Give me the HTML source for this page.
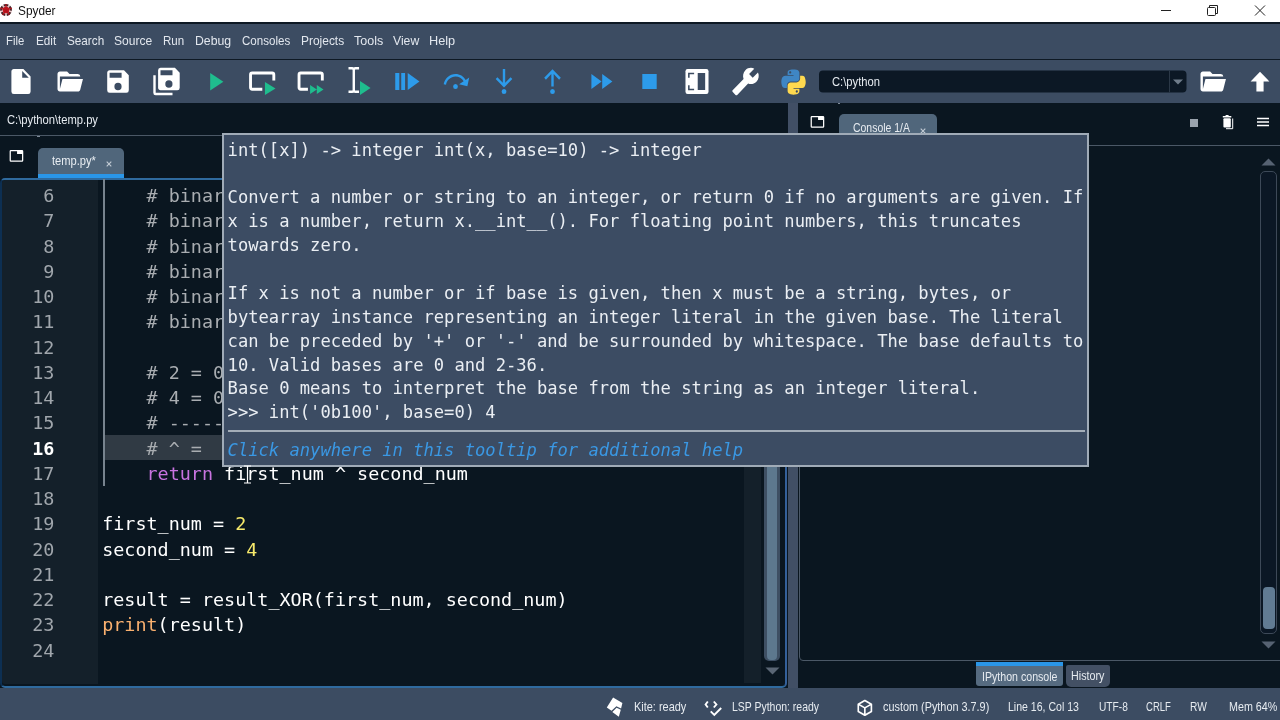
<!DOCTYPE html>
<html lang="en">
<head>
<meta charset="utf-8">
<title>Spyder</title>
<style>
*{box-sizing:border-box;margin:0;padding:0}
html,body{width:1280px;height:720px;overflow:hidden;background:#0a1620}
body{position:relative;font-family:"Liberation Sans",sans-serif;color:#e4e9ef;font-size:12px}
#root{position:absolute;left:0;top:0;width:1280px;height:720px;will-change:transform}
.abs{position:absolute}
svg{position:absolute;overflow:visible}
#titlebar{left:0;top:0;width:1280px;height:22px;background:#fff}
#titlebar .t{left:18px;top:3px;font-size:12.5px;color:#111;line-height:16px}
#menubar{left:0;top:22px;width:1280px;height:38px;background:#3c4c62;border-top:2px solid #0e1924;border-bottom:1px solid #0e1924}
#menubar span{position:absolute;top:9px;line-height:16px;font-size:12.3px;color:#e2e7ee;white-space:nowrap}
#toolbar{left:0;top:60px;width:1280px;height:43px;background:#3c4c62}
.mono{font-family:"DejaVu Sans Mono","Liberation Mono",monospace}
#split{left:787.6px;top:103px;width:10.8px;height:585px;background:#414f65}
#status{left:0;top:688.4px;width:1280px;height:32px;background:#3c4c62}
#status span{position:absolute;top:11px;line-height:16px;font-size:12.3px;color:#e2e7ee;white-space:nowrap}
.ui{position:absolute;line-height:16px;font-size:11.2px;color:#e6ebf0;white-space:nowrap;transform-origin:0 50%}
#editor{left:0px;top:178px;width:787px;height:509.5px;border:2px solid #2f6a9e;border-left-color:#0d2f52;border-right-color:#34609a;border-radius:5px;background:#0a1620}
.ln{position:absolute;left:0;width:54.4px;text-align:right;font-size:18.42px;line-height:25.25px;height:25.25px;color:#a0a6ac}
.ln.cur{color:#fff;font-weight:bold}
.cl{position:absolute;left:102.2px;white-space:pre;font-size:18.42px;line-height:25.25px;height:25.25px;color:#fff}
.c{color:#a9adb1}.k{color:#c873e0}.n{color:#f7ea6b}.b{color:#f9b06f}
#tip{left:221.8px;top:133px;width:867.5px;height:333.6px;background:#3c4c63;border:2px solid #a0abb7}
.tl{position:absolute;left:227.6px;white-space:pre;font-size:17.14px;line-height:23.88px;height:23.88px;color:#eaeef3}
</style>
</head>
<body>
<div id="root">
<div id="titlebar" class="abs">
<svg style="left:0;top:3px" width="14" height="14" viewBox="0 0 14 14"><circle cx="6" cy="7" r="6" fill="#e9c9cb"/><path d="M3.37 1.61A6.0 6.0 0 0 1 8.63 1.61L7.71 3.49A3.9 3.9 0 0 0 4.29 3.49ZM10.32 2.83A6.0 6.0 0 0 1 11.94 7.84L9.86 7.54A3.9 3.9 0 0 0 8.81 4.29ZM11.30 9.82A6.0 6.0 0 0 1 7.04 12.91L6.68 10.84A3.9 3.9 0 0 0 9.44 8.83ZM4.96 12.91A6.0 6.0 0 0 1 0.70 9.82L2.56 8.83A3.9 3.9 0 0 0 5.32 10.84ZM0.06 7.84A6.0 6.0 0 0 1 1.68 2.83L3.19 4.29A3.9 3.9 0 0 0 2.14 7.54Z" fill="#43262a"/><circle cx="6" cy="7" r="3.3" fill="#c3161f"/><path d="M6 7L6 1M6 7L11.7 5.1M6 7L9.5 11.9M6 7L2.5 11.9M6 7L0.3 5.1" stroke="#b3121b" stroke-width="1.3"/></svg>

<svg style="left:1150px;top:0" width="130" height="22" viewBox="0 0 130 22" fill="none" stroke="#222" stroke-width="1"><path d="M11 10.5 H21"/><rect x="57.5" y="7.5" width="8" height="8" rx="1"/><path d="M59.5 7.5 V5.5 H67.5 V13.5 H65.5"/><path d="M105 5.5 L115 15.5 M115 5.5 L105 15.5"/></svg>
</div>
<div class="ui" style="left:17.60px;top:3.20px;font-size:12.4px;color:#111;transform:scaleX(0.9545);">Spyder</div>
<div id="menubar" class="abs"></div>
<div class="ui" style="left:6.20px;top:33.30px;font-size:12.4px;color:#e2e7ee;transform:scaleX(0.9109);">File</div>
<div class="ui" style="left:36.20px;top:33.30px;font-size:12.4px;color:#e2e7ee;transform:scaleX(0.9454);">Edit</div>
<div class="ui" style="left:67.20px;top:33.30px;font-size:12.4px;color:#e2e7ee;transform:scaleX(0.9468);">Search</div>
<div class="ui" style="left:114.20px;top:33.30px;font-size:12.4px;color:#e2e7ee;transform:scaleX(0.9723);">Source</div>
<div class="ui" style="left:163.20px;top:33.30px;font-size:12.4px;color:#e2e7ee;transform:scaleX(0.9320);">Run</div>
<div class="ui" style="left:195.20px;top:33.30px;font-size:12.4px;color:#e2e7ee;transform:scaleX(0.9907);">Debug</div>
<div class="ui" style="left:242.20px;top:33.30px;font-size:12.4px;color:#e2e7ee;transform:scaleX(0.9324);">Consoles</div>
<div class="ui" style="left:301.20px;top:33.30px;font-size:12.4px;color:#e2e7ee;transform:scaleX(0.9644);">Projects</div>
<div class="ui" style="left:354.20px;top:33.30px;font-size:12.4px;color:#e2e7ee;transform:scaleX(1.0087);">Tools</div>
<div class="ui" style="left:393.20px;top:33.30px;font-size:12.4px;color:#e2e7ee;transform:scaleX(0.9830);">View</div>
<div class="ui" style="left:429.20px;top:33.30px;font-size:12.4px;color:#e2e7ee;transform:scaleX(1.0273);">Help</div>
<div id="toolbar" class="abs">
<svg style="left:0;top:0" width="1280" height="43" viewBox="0 0 1280 43">
<g transform="translate(6.6 6.5) scale(1.2 1.25)"><path d="M13,9V3.5L18.5,9M6,2C4.89,2 4,2.89 4,4V20A2,2 0 0,0 6,22H18A2,2 0 0,0 20,20V8L14,2H6Z" fill="#ffffff"/></g>
<g transform="translate(55.1 6.5) scale(1.2 1.25)"><path d="M19,20H4C2.89,20 2,19.1 2,18V6C2,4.89 2.89,4 4,4H10L12,6H19A2,2 0 0,1 21,8H21L4,8V18L6.14,10H23.21L20.93,18.5C20.7,19.37 19.92,20 19,20Z" fill="#ffffff"/></g>
<g transform="translate(103.6 6.5) scale(1.2 1.25)"><path d="M15,9H5V5H15M12,19A3,3 0 0,1 9,16A3,3 0 0,1 12,13A3,3 0 0,1 15,16A3,3 0 0,1 12,19M17,3H5C3.89,3 3,3.9 3,5V19A2,2 0 0,0 5,21H19A2,2 0 0,0 21,19V7L17,3Z" fill="#ffffff"/></g>
<g transform="translate(152.1 6.5) scale(1.2 1.25)"><path d="M17,7V3H7V7H17M14,17A3,3 0 0,0 17,14A3,3 0 0,0 14,11A3,3 0 0,0 11,14A3,3 0 0,0 14,17M19,1L23,5V17A2,2 0 0,1 21,19H7C5.89,19 5,18.1 5,17V3A2,2 0 0,1 7,1H19M1,7H3V21H17V23H3A2,2 0 0,1 1,21V7Z" fill="#ffffff"/></g>
<g transform="translate(200.6 6.5) scale(1.2 1.25)"><path d="M8,5.14V19.14L19,12.14L8,5.14Z" fill="#1fbd8e"/></g>
<g transform="translate(249.1 6.5) scale(1.2 1.25)"><path d="M11 18.1H2.6Q1.2 18.1 1.2 16.7V6.6Q1.2 5.2 2.6 5.2H19.2Q20.6 5.2 20.6 6.6V11.2" fill="none" stroke="#ffffff" stroke-width="2.4"/><path d="M13.2 12.4L22 17.6L13.2 22.8Z" fill="#1fbd8e"/></g>
<g transform="translate(297.6 6.5) scale(1.2 1.25)"><path d="M8.6 18.1H2.6Q1.2 18.1 1.2 16.7V6.6Q1.2 5.2 2.6 5.2H19.2Q20.6 5.2 20.6 6.6V11.2" fill="none" stroke="#ffffff" stroke-width="2.4"/><path d="M10.4 14.8L16 18.4L10.4 22ZM16 14.8L21.6 18.4L16 22Z" fill="#1fbd8e"/></g>
<g transform="translate(346.1 6.5) scale(1.2 1.25)"><path d="M2 1.4H5Q6.4 1.4 6.4 2.8V18.8Q6.4 20.2 5 20.2H2M10.8 1.4H7.8Q6.4 1.4 6.4 2.8M6.4 18.8Q6.4 20.2 7.8 20.2H10.8" fill="none" stroke="#ffffff" stroke-width="2"/><path d="M11.6 11.6L20.4 17.2L11.6 22.8Z" fill="#1fbd8e"/></g>
<g transform="translate(392.6 6.5) scale(1.2 1.25)"><path d="M2.2 5.2H5.6V18.8H2.2ZM7.2 5.2H10.4V18.8H7.2ZM12.6 5.2L22.4 12L12.6 18.8Z" fill="#2d9bea"/></g>
<g transform="translate(441.1 6.5) scale(1.2 1.25)"><path d="M12,14A2,2 0 0,1 14,16A2,2 0 0,1 12,18A2,2 0 0,1 10,16A2,2 0 0,1 12,14M23.46,8.86L21.87,15.75L15,14.16L18.8,11.78C17.39,9.5 14.87,8 12,8C8.05,8 4.77,10.86 4.12,14.63L2.15,14.28C2.96,9.58 7.06,6 12,6C15.58,6 18.73,7.89 20.5,10.72L23.46,8.86Z" fill="#2d9bea"/></g>
<g transform="translate(489.6 6.5) scale(1.2 1.25)"><path d="M12,22A2,2 0 0,1 10,20A2,2 0 0,1 12,18A2,2 0 0,1 14,20A2,2 0 0,1 12,22M13,2V13L17.5,8.5L18.92,9.92L12,16.84L5.08,9.92L6.5,8.5L11,13V2H13Z" fill="#2d9bea"/></g>
<g transform="translate(538.1 6.5) scale(1.2 1.25)"><path d="M12,22A2,2 0 0,1 10,20A2,2 0 0,1 12,18A2,2 0 0,1 14,20A2,2 0 0,1 12,22M13,16H11V6L6.5,10.5L5.08,9.08L12,2.16L18.92,9.08L17.5,10.5L13,6V16Z" fill="#2d9bea"/></g>
<g transform="translate(586.6 6.5) scale(1.2 1.25)"><path d="M13,6V18L21.5,12M4,18L12.5,12L4,6V18Z" fill="#2d9bea"/></g>
<g transform="translate(635.1 6.5) scale(1.2 1.25)"><path d="M18,18H6V6H18V18Z" fill="#2d9bea"/></g>
<g transform="translate(682.6 6.5) scale(1.2 1.25)"><rect x="2.4" y="2" width="19.2" height="20" rx="1.8" fill="#ffffff"/><rect x="12.6" y="5.2" width="6.2" height="13.6" fill="#3c4c62"/><path d="M9.6 5.6H5.2V9M5.2 15V18.4H9.6" fill="none" stroke="#3c4c62" stroke-width="1.3"/></g>
<g transform="translate(759.9 6.5) scale(-1.2 1.25)"><path d="M22.7,19L13.6,9.9C14.5,7.6 14,4.9 12.1,3C10.1,1 7.1,0.6 4.7,1.7L9,6L6,9L1.6,4.7C0.4,7.1 0.9,10.1 2.9,12.1C4.8,14 7.5,14.5 9.8,13.6L18.9,22.7C19.3,23.1 19.9,23.1 20.3,22.7L22.6,20.4C23.1,20 23.1,19.3 22.7,19Z" fill="#ffffff"/></g>
<g transform="translate(781.3 9.4) scale(0.22 0.2245)"><path d="M54.9 0C50.3 0 46 .4 42.1 1.1C30.8 3.1 28.7 7.3 28.7 15V25.2H55.5V28.6H18.7C10.9 28.6 4.1 33.3 2 42.2C-.5 52.4-.6 58.8 2 69.5C3.9 77.4 8.4 83.1 16.2 83.1H25.4V70.8C25.4 62 33.1 54.1 42.1 54.1H68.9C76.3 54.1 82.2 48 82.2 40.7V15C82.2 7.7 76.1 2.3 68.9 1.1C64.3.3 59.6 0 54.9 0ZM40.4 8.2C43.2 8.2 45.4 10.5 45.4 13.3C45.4 16.1 43.2 18.3 40.4 18.3C37.6 18.3 35.4 16.1 35.4 13.3C35.4 10.5 37.6 8.2 40.4 8.2Z" fill="#3f86c4" fill-rule="evenodd"/><path d="M85.6 28.6V40.7C85.6 50 77.7 57.8 68.9 57.8H42.1C34.8 57.8 28.7 64.1 28.7 71.2V96.8C28.7 104.1 35 108.3 42.1 110.4C50.6 112.9 58.8 113.4 68.9 110.4C75.6 108.4 82.2 104.5 82.2 96.8V86.6H55.5V83.2H95.6C103.4 83.2 106.3 77.8 109 69.6C111.8 61.2 111.7 53.1 109 42.3C107.1 34.5 103.4 28.7 95.6 28.7ZM70.5 93.4C73.3 93.4 75.5 95.7 75.5 98.5C75.5 101.3 73.3 103.6 70.5 103.6C67.7 103.6 65.5 101.3 65.5 98.5C65.5 95.7 67.7 93.4 70.5 93.4Z" fill="#ffd94f" fill-rule="evenodd"/></g>
<rect x="819" y="10.5" width="367.5" height="22" rx="4" fill="#0c1825"/>
<path d="M1169.5 10.5V32.5" stroke="#2b3847" stroke-width="1"/>
<path d="M1173 19.5H1183L1178 24.5Z" fill="#6f7c8a"/>
<g transform="translate(1198.1 6.5) scale(1.2 1.25)"><path d="M19,20H4C2.89,20 2,19.1 2,18V6C2,4.89 2.89,4 4,4H10L12,6H19A2,2 0 0,1 21,8H21L4,8V18L6.14,10H23.21L20.93,18.5C20.7,19.37 19.92,20 19,20Z" fill="#ffffff"/></g>
<g transform="translate(1245.6 6.5) scale(1.2 1.25)"><path d="M15,20H9V12H4.16L12,4.16L19.84,12H15V20Z" fill="#ffffff"/></g>
</svg>
</div>
<div class="ui" style="left:6.50px;top:111.74px;font-size:12.3px;color:#e6ebf0;transform:scaleX(0.9117);">C:\python\temp.py</div>
<div class="abs" style="left:0;top:135px;width:788px;height:1px;background:#4b5866"></div>
<div class="abs" style="left:37px;top:136px;width:2.5px;height:1px;background:#7f8b98"></div>
<div class="abs" style="left:837.5px;top:102.6px;width:2.5px;height:1px;background:#7f8b98"></div>
<svg style="left:9.4px;top:148px" width="15" height="16" viewBox="0 0 15 16"><path transform="scale(0.62 0.66)" d="M21,3H3A2,2 0 0,0 1,5V19A2,2 0 0,0 3,21H21A2,2 0 0,0 23,19V5A2,2 0 0,0 21,3M21,19H3V5H13V9H21V19Z" fill="#fff"/></svg>
<div class="abs" style="left:38px;top:147.5px;width:86px;height:31.7px;background:#50667b;border-radius:5px 5px 0 0;border-bottom:5.6px solid #2a96e8"></div>
<div class="ui" style="left:52.00px;top:153.17px;font-size:12.2px;color:#e8edf2;transform:scaleX(0.9139);">temp.py*</div>
<svg style="left:106.3px;top:160.6px" width="6" height="6" viewBox="0 0 6 6"><path d="M0.7 0.7L5.3 5.3M5.3 0.7L0.7 5.3" stroke="#c3ccd5" stroke-width="1.1"/></svg>
<div id="editor" class="abs"></div>
<div class="abs" style="left:2px;top:179.5px;width:95.5px;height:504.5px;background:#14202a;border-radius:3px 0 0 3px"></div>
<div class="abs" style="left:744px;top:179px;width:16.5px;height:504px;background:#14202a"></div>
<div class="abs" style="left:103px;top:434.90px;width:641px;height:25px;background:#303a44"></div>
<div class="abs" style="left:103px;top:179px;width:1.5px;height:307px;background:#77838e"></div>
<div class="mono">
<div class="ln" style="top:183.15px">6</div><div class="cl" style="top:183.15px"><span class="c">    # binary</span></div>
<div class="ln" style="top:208.40px">7</div><div class="cl" style="top:208.40px"><span class="c">    # binary</span></div>
<div class="ln" style="top:233.65px">8</div><div class="cl" style="top:233.65px"><span class="c">    # binary</span></div>
<div class="ln" style="top:258.90px">9</div><div class="cl" style="top:258.90px"><span class="c">    # binary</span></div>
<div class="ln" style="top:284.15px">10</div><div class="cl" style="top:284.15px"><span class="c">    # binary</span></div>
<div class="ln" style="top:309.40px">11</div><div class="cl" style="top:309.40px"><span class="c">    # binary</span></div>
<div class="ln" style="top:334.65px">12</div>
<div class="ln" style="top:359.90px">13</div><div class="cl" style="top:359.90px"><span class="c">    # 2 = 0010</span></div>
<div class="ln" style="top:385.15px">14</div><div class="cl" style="top:385.15px"><span class="c">    # 4 = 0100</span></div>
<div class="ln" style="top:410.40px">15</div><div class="cl" style="top:410.40px"><span class="c">    # ---------</span></div>
<div class="ln cur" style="top:435.65px">16</div><div class="cl" style="top:435.65px"><span class="c">    # ^ =  0110</span></div>
<div class="ln" style="top:460.90px">17</div><div class="cl" style="top:460.90px">    <span class="k">return</span> first_num ^ second_num</div>
<div class="ln" style="top:486.15px">18</div>
<div class="ln" style="top:511.40px">19</div><div class="cl" style="top:511.40px">first_num = <span class="n">2</span></div>
<div class="ln" style="top:536.65px">20</div><div class="cl" style="top:536.65px">second_num = <span class="n">4</span></div>
<div class="ln" style="top:561.90px">21</div>
<div class="ln" style="top:587.15px">22</div><div class="cl" style="top:587.15px">result = result_XOR(first_num, second_num)</div>
<div class="ln" style="top:612.40px">23</div><div class="cl" style="top:612.40px"><span class="b">print</span>(result)</div>
<div class="ln" style="top:637.65px">24</div>
</div>
<div class="abs" style="left:764px;top:198px;width:16px;height:463px;background:#3e4f63;border-radius:5px"></div>
<div class="abs" style="left:766.8px;top:200px;width:10.6px;height:459.5px;background:#5d788e;border-radius:4px"></div>
<svg style="left:765px;top:667px" width="15" height="8" viewBox="0 0 15 8"><path d="M0.5 0.5 H14.5 L7.5 7.5 Z" fill="#5a6675"/></svg>
<div id="split" class="abs"></div>
<svg style="left:810.4px;top:114px" width="15" height="16" viewBox="0 0 15 16"><path transform="scale(0.62 0.66)" d="M21,3H3A2,2 0 0,0 1,5V19A2,2 0 0,0 3,21H21A2,2 0 0,0 23,19V5A2,2 0 0,0 21,3M21,19H3V5H13V9H21V19Z" fill="#fff"/></svg>
<div class="abs" style="left:839px;top:114px;width:98px;height:32px;background:#50667b;border-radius:5px 5px 0 0"></div>
<div class="ui" style="left:853.00px;top:119.77px;font-size:12.2px;color:#e8edf2;transform:scaleX(0.8576);">Console 1/A</div>
<svg style="left:919.5px;top:127.5px" width="6" height="6" viewBox="0 0 6 6"><path d="M0.7 0.7L5.3 5.3M5.3 0.7L0.7 5.3" stroke="#c3ccd5" stroke-width="1.1"/></svg>
<div class="abs" style="left:1190px;top:118.5px;width:8px;height:8px;background:#9aa3ad"></div>
<svg style="left:0;top:0" width="1280" height="140" viewBox="0 0 1280 140"><path d="M1225.6 115H1228.6V116H1231.3V117.6H1222.8V116H1225.6Z" fill="#fff"/><rect x="1223.4" y="118.2" width="7.4" height="9.4" rx="1" fill="#fff"/><path d="M1232.7 118.5V128.7H1226" fill="none" stroke="#fff" stroke-width="1"/></svg>
<svg style="left:1257px;top:117px" width="12" height="10" viewBox="0 0 12 10"><path d="M0 1.5 H12 M0 5 H12 M0 8.5 H12" stroke="#fff" stroke-width="1.7"/></svg>
<div class="abs" style="left:799px;top:145px;width:490px;height:516px;border:1px solid #4b5866;border-radius:4px"></div>
<svg style="left:1261px;top:158px" width="15" height="8" viewBox="0 0 15 8"><path d="M0.5 7.5 H14.5 L7.5 0.5 Z" fill="#566272"/></svg>
<div class="abs" style="left:1260px;top:171px;width:17px;height:463px;border:1px solid #3d4958;border-radius:5px;background:#0b1725"></div>
<div class="abs" style="left:1262.5px;top:587px;width:12px;height:42px;background:#617b93;border-radius:4px"></div>
<svg style="left:1261px;top:641px" width="15" height="8" viewBox="0 0 15 8"><path d="M0.5 0.5 H14.5 L7.5 7.5 Z" fill="#566272"/></svg>
<div class="abs" style="left:976.2px;top:662.3px;width:87px;height:24.2px;background:#566b80;border-top:4.7px solid #2a96e8;border-radius:0 0 3px 3px"></div>
<div class="ui" style="left:982.00px;top:668.57px;font-size:12.2px;color:#e6ebf0;transform:scaleX(0.8708);">IPython console</div>
<div class="abs" style="left:1066.2px;top:665px;width:44px;height:21.5px;background:#435064;border-radius:2px 2px 5px 5px"></div>
<div class="ui" style="left:1071.30px;top:667.97px;font-size:12.2px;color:#e6ebf0;transform:scaleX(0.8799);">History</div>
<div id="tip" class="abs"></div>
<div class="mono">
<div class="tl" style="top:138.60px">int([x]) -&gt; integer int(x, base=10) -&gt; integer</div>
<div class="tl" style="top:186.36px">Convert a number or string to an integer, or return 0 if no arguments are given. If</div>
<div class="tl" style="top:210.24px">x is a number, return x.__int__(). For floating point numbers, this truncates</div>
<div class="tl" style="top:234.12px">towards zero.</div>
<div class="tl" style="top:281.88px">If x is not a number or if base is given, then x must be a string, bytes, or</div>
<div class="tl" style="top:305.76px">bytearray instance representing an integer literal in the given base. The literal</div>
<div class="tl" style="top:329.64px">can be preceded by &#x27;+&#x27; or &#x27;-&#x27; and be surrounded by whitespace. The base defaults to</div>
<div class="tl" style="top:353.52px">10. Valid bases are 0 and 2-36.</div>
<div class="tl" style="top:377.40px">Base 0 means to interpret the base from the string as an integer literal.</div>
<div class="tl" style="top:401.28px">&gt;&gt;&gt; int(&#x27;0b100&#x27;, base=0) 4</div>
<div class="abs" style="left:228px;top:429.6px;width:857px;height:2px;background:#a3adb8"></div>
<div class="tl" style="top:438.5px;color:#3a98e4;font-style:italic">Click anywhere in this tooltip for additional help</div>
</div>
<svg style="left:243px;top:465px" width="9" height="19" viewBox="0 0 9 19"><path d="M1 1 H8 M1 18 H8 M4.5 1 V18" stroke="#fff" stroke-width="1.2" fill="none"/></svg>
<div id="status" class="abs">
<svg style="left:0;top:0" width="1280" height="32" viewBox="0 688 1280 32">
<path d="M613.1 697.4L622.4 703.1L621.1 708.6L616.4 706.2L611.5 710.8L606.8 707.5ZM616.6 707.7L620.8 709.8L618.8 716.8L612.3 711.9Z" fill="#fff"/>
<path d="M707.8 701.5L705.6 704.5L707.8 707.5M713.8 701.5L716.4 704.5L713.8 707.5M710.7 711.3L714.3 714.9L721.2 708" fill="none" stroke="#fff" stroke-width="1.9"/>
<g transform="translate(855 698) scale(0.82)"><path d="M21,16.5C21,16.88 20.79,17.21 20.47,17.38L12.57,21.82C12.41,21.94 12.21,22 12,22C11.79,22 11.59,21.94 11.43,21.82L3.53,17.38C3.21,17.21 3,16.88 3,16.5V7.5C3,7.12 3.21,6.79 3.53,6.62L11.43,2.18C11.59,2.06 11.79,2 12,2C12.21,2 12.41,2.06 12.57,2.18L20.47,6.62C20.79,6.79 21,7.12 21,7.5V16.5M12,4.15L6.04,7.5L12,10.85L17.96,7.5L12,4.15M5,15.91L11,19.29V12.58L5,9.21V15.91M19,15.91V9.21L13,12.58V19.29L19,15.91Z" fill="#ffffff"/></g>
</svg>
</div>
<div class="ui" style="left:634.30px;top:699.07px;font-size:12.2px;color:#e6ebf0;transform:scaleX(0.8985);">Kite: ready</div>
<div class="ui" style="left:732.00px;top:699.07px;font-size:12.2px;color:#e6ebf0;transform:scaleX(0.8581);">LSP Python: ready</div>
<div class="ui" style="left:883.30px;top:699.07px;font-size:12.2px;color:#e6ebf0;transform:scaleX(0.8915);">custom (Python 3.7.9)</div>
<div class="ui" style="left:1008.30px;top:699.07px;font-size:12.2px;color:#e6ebf0;transform:scaleX(0.8651);">Line 16, Col 13</div>
<div class="ui" style="left:1098.90px;top:699.07px;font-size:12.2px;color:#e6ebf0;transform:scaleX(0.8362);">UTF-8</div>
<div class="ui" style="left:1146.00px;top:699.07px;font-size:12.2px;color:#e6ebf0;transform:scaleX(0.7816);">CRLF</div>
<div class="ui" style="left:1189.50px;top:699.07px;font-size:12.2px;color:#e6ebf0;transform:scaleX(0.8356);">RW</div>
<div class="ui" style="left:1228.90px;top:699.07px;font-size:12.2px;color:#e6ebf0;transform:scaleX(0.8813);">Mem 64%</div>
<div class="ui" style="left:831.50px;top:73.74px;font-size:12.3px;color:#e6ebf0;transform:scaleX(0.9117);">C:\python</div>
</div>
</body>
</html>
